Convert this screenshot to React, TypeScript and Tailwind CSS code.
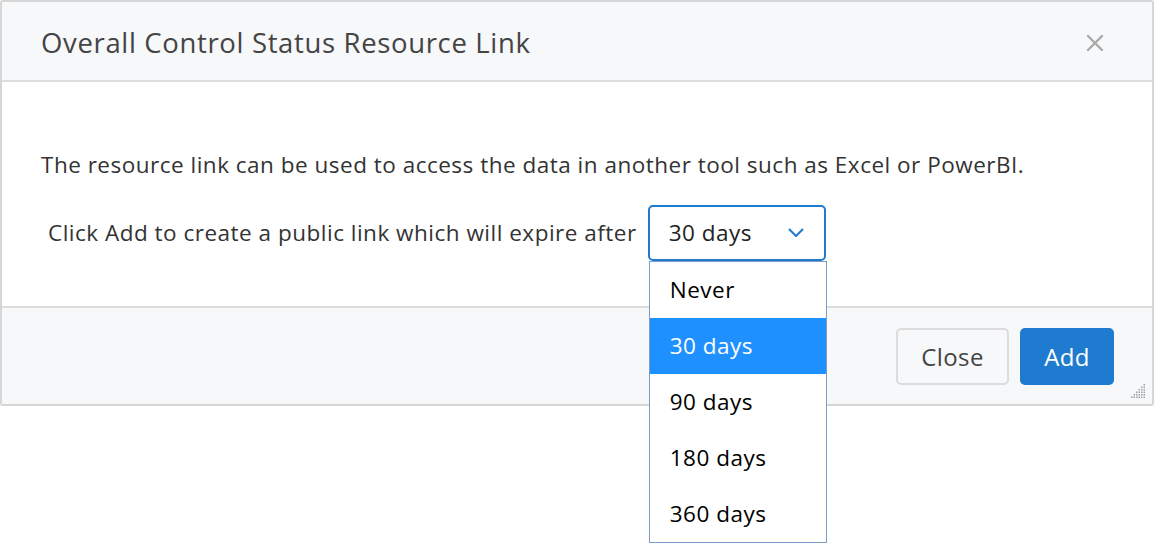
import React from "react";

const font = { fontFamily: '"Open Sans", "Noto Sans", "Liberation Sans", sans-serif' };

function Chevron() {
  return (
    <svg width="16" height="10" viewBox="0 0 16 10" fill="none">
      <path d="M1.5 1.5 L8 8 L14.5 1.5" stroke="#1e7bd0" strokeWidth="2" strokeLinecap="round" strokeLinejoin="round" />
    </svg>
  );
}

function Grip() {
  const dots: React.ReactNode[] = [];
  for (let r = 0; r < 6; r++) {
    for (let c = 5 - r; c < 6; c++) {
      dots.push(<rect key={`${r}-${c}`} x={c * 2.5} y={r * 2.5} width="1.5" height="1.5" fill="#a0a0a0" />);
    }
  }
  return (
    <svg width="15" height="15" viewBox="0 0 15 15">
      {dots}
    </svg>
  );
}

const options = ["Never", "30 days", "90 days", "180 days", "360 days"];

export default function App() {
  return (
    <div className="w-[1155px] h-[544px] bg-white relative" style={font}>
      <div className="w-[1154px] border-2 border-[#d6d6d6] rounded-[3px] flex flex-col">
        {/* header */}
        <div className="h-[80px] bg-[#f7f8fa] border-b-2 border-[#dcdcdc] flex items-center justify-between pt-[3px] pl-[39px] pr-[48px]">
          <div className="text-[27.5px] tracking-[0.65px] text-[#444] leading-none">Overall Control Status Resource Link</div>
          <svg width="18" height="18" viewBox="0 0 18 18">
            <path d="M2 2 L16 16 M16 2 L2 16" stroke="#a9a9a9" strokeWidth="2.4" strokeLinecap="round" />
          </svg>
        </div>
        {/* body */}
        <div className="h-[224px] bg-white pt-[66px] pl-[39px] flex flex-col">
          <p className="text-[22.5px] tracking-[0.5px] leading-[33px] text-[#333]">
            The resource link can be used to access the data in another tool such as Excel or PowerBI.
          </p>
          <div className="mt-[24px] flex items-center">
            <span className="text-[22.5px] tracking-[0.5px] text-[#333] pl-[7px] mr-[11px]">Click Add to create a public link which will expire after</span>
            <div className="relative">
              <div className="w-[178px] h-[56px] border-2 border-[#1e7bd0] rounded-[5px] flex items-center justify-between pl-[19px] pr-[20px] text-[22.5px] tracking-[0.5px] text-[#222] bg-white">
                <span>30 days</span>
                <Chevron />
              </div>
              <div className="absolute left-[1px] top-[56px] w-[178px] border border-[#7f9bc7] bg-white z-10">
                {options.map((o) => (
                  <div
                    key={o}
                    className={
                      o === "30 days"
                        ? "h-[56px] flex items-center pl-[20px] text-[22.5px] tracking-[0.5px] bg-[#1e90ff] text-white"
                        : "h-[56px] flex items-center pl-[20px] text-[22.5px] tracking-[0.5px] text-black"
                    }
                  >
                    {o}
                  </div>
                ))}
              </div>
            </div>
          </div>
        </div>
        {/* footer */}
        <div className="h-[98px] bg-[#f7f8fa] border-t-2 border-[#dcdcdc] flex items-start justify-end pt-[20px] pr-[38px] relative">
          <button className="w-[113px] h-[57px] border-2 border-[#dcdcdc] rounded-[5px] text-[24px] tracking-[0.4px] text-[#444] bg-[#f7f8fa] flex items-center justify-center">
            Close
          </button>
          <button className="ml-[11px] w-[94px] h-[57px] rounded-[5px] text-[24px] tracking-[0.4px] text-white bg-[#1e7bd0] flex items-center justify-center">
            Add
          </button>
          <div className="absolute right-[6px] bottom-[5px]">
            <Grip />
          </div>
        </div>
      </div>
    </div>
  );
}
